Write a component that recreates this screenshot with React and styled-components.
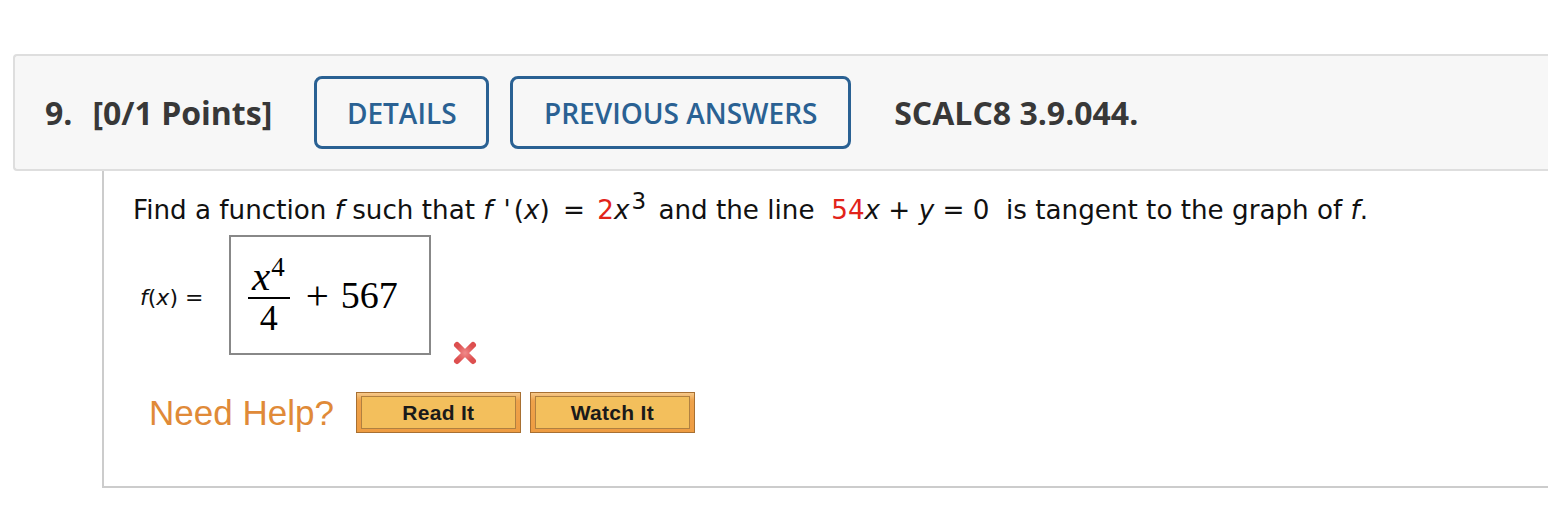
import styled, { createGlobalStyle } from 'styled-components';

const GlobalStyle = createGlobalStyle`
  body {
    margin: 0;
    background: #fff;
  }
`;

const Page = styled.div`
  padding: 54px 0 0 13px;
`;

const Header = styled.div`
  display: flex;
  align-items: center;
  height: 113px;
  background: #f7f7f7;
  border: 2px solid #dedede;
  border-right: none;
  border-radius: 4px 0 0 4px;
  padding-left: 30px;
  font-family: "Open Sans", sans-serif;
  font-weight: 700;
  color: #383838;
`;

const Number = styled.span`
  font-size: 32px;
  margin-right: 20px;
`;

const Points = styled.span`
  font-size: 32px;
  margin-right: 42px;
`;

const OutlineButton = styled.button`
  height: 73px;
  width: ${(p) => p.width}px;
  margin-right: ${(p) => p.gap}px;
  background: transparent;
  border: 3px solid #2a6193;
  border-radius: 8px;
  color: #2a6193;
  font-family: "Open Sans", sans-serif;
  font-weight: 600;
  font-size: 28px;
  padding: 0;
`;

const Code = styled.span`
  font-size: 32px;
`;

const Body = styled.div`
  margin-left: 89px;
  height: 317px;
  border-left: 2px solid #cccccc;
  border-bottom: 2px solid #cccccc;
  padding: 24px 0 0 29px;
  box-sizing: border-box;
  font-family: "DejaVu Sans", Verdana, sans-serif;
  color: #111;
`;

const Question = styled.p`
  margin: 0;
  font-size: 26.2px;
  line-height: 30px;
  white-space: nowrap;
`;

const Red = styled.span`
  color: #e2231a;
`;

const Prime = styled.span`
  margin: 0 3px 0 11px;
`;

const Eq = styled.span`
  margin: 0 4px 0 5px;
`;

const Sup = styled.sup`
  font-size: 23px;
  line-height: 0;
  margin-left: 2px;
  margin-right: 4px;
`;

const AnswerRow = styled.div`
  display: flex;
  align-items: flex-start;
  margin-top: 10px;
  margin-left: 7px;
`;

const Label = styled.span`
  font-size: 22px;
  line-height: 26px;
  margin-top: 50px;
  width: 89px;
`;

const AnswerBox = styled.div`
  width: 202px;
  height: 120px;
  border: 2px solid #888;
  display: flex;
  align-items: center;
  padding-left: 17px;
  box-sizing: border-box;
  font-family: "Liberation Serif", "DejaVu Serif", serif;
  font-size: 38px;
  color: #000;
  background: #fff;
`;

const Fraction = styled.span`
  display: inline-flex;
  flex-direction: column;
  align-items: center;
  margin-right: 16px;
  margin-top: 2px;
`;

const Numer = styled.span`
  border-bottom: 2px solid #000;
  padding: 0 5px 0 4px;
  line-height: 40px;
`;

const Denom = styled.span`
  line-height: 38px;
  font-size: 36px;
`;

const Var = styled.i`
  font-size: 41px;
`;

const SmallSup = styled.sup`
  font-size: 27px;
  line-height: 0;
  margin-left: 1px;
`;

const Plus = styled.span`
  font-size: 41px;
  margin-right: 12px;
`;

const WrongMark = styled.svg`
  margin: 105px 0 0 21px;
`;

const HelpRow = styled.div`
  display: flex;
  align-items: center;
  margin-top: 26px;
  margin-left: 16px;
`;

const NeedHelp = styled.span`
  font-family: "Liberation Sans", Arial, sans-serif;
  font-size: 35px;
  line-height: 40px;
  color: #e08a38;
  margin-right: 22px;
`;

const HelpButton = styled.button`
  width: 165px;
  height: 41px;
  margin-right: 9px;
  padding: 3px 4px;
  background: linear-gradient(#f6c98a, #eea24a 20%, #ee9c42);
  border: 1px solid #a87032;
  box-sizing: border-box;
  display: flex;
`;

const HelpInner = styled.span`
  flex: 1;
  display: flex;
  align-items: center;
  justify-content: center;
  background: #f3bf5c;
  border: 1px solid #b08040;
  font-family: "Liberation Sans", Arial, sans-serif;
  font-weight: 700;
  font-size: 21px;
  letter-spacing: 0.3px;
  color: #1a1a1a;
`;

export default function App() {
  return (
    <Page>
      <GlobalStyle />
      <Header>
        <Number>9.</Number>
        <Points>[0/1 Points]</Points>
        <OutlineButton width={175} gap={21}>DETAILS</OutlineButton>
        <OutlineButton width={341} gap={43}>PREVIOUS ANSWERS</OutlineButton>
        <Code>SCALC8 3.9.044.</Code>
      </Header>
      <Body>
        <Question>
          Find a function <i>f</i> such that <i>f</i>
          <Prime>'</Prime>(<i>x</i>) <Eq>=</Eq> <Red>2</Red><i>x</i>
          <Sup>3</Sup> and the line&nbsp; <Red>54</Red><i>x</i> + <i>y</i> = 0&nbsp; is tangent to the
          graph of <i>f</i>.
        </Question>
        <AnswerRow>
          <Label>
            <i>f</i>(<i>x</i>) =
          </Label>
          <AnswerBox>
            <Fraction>
              <Numer>
                <Var>x</Var>
                <SmallSup>4</SmallSup>
              </Numer>
              <Denom>4</Denom>
            </Fraction>
            <Plus>+</Plus>
            567
          </AnswerBox>
          <WrongMark width="26" height="26" viewBox="0 0 26 26">
            <defs>
              <radialGradient id="xg" cx="50%" cy="50%" r="60%">
                <stop offset="0%" stopColor="#f08a8a" />
                <stop offset="100%" stopColor="#dd4f4f" />
              </radialGradient>
            </defs>
            <path
              d="M5 5 L21 21 M21 5 L5 21"
              stroke="url(#xg)"
              strokeWidth="6"
              strokeLinecap="round"
            />
          </WrongMark>
        </AnswerRow>
        <HelpRow>
          <NeedHelp>Need Help?</NeedHelp>
          <HelpButton>
            <HelpInner>Read It</HelpInner>
          </HelpButton>
          <HelpButton>
            <HelpInner>Watch It</HelpInner>
          </HelpButton>
        </HelpRow>
      </Body>
    </Page>
  );
}
